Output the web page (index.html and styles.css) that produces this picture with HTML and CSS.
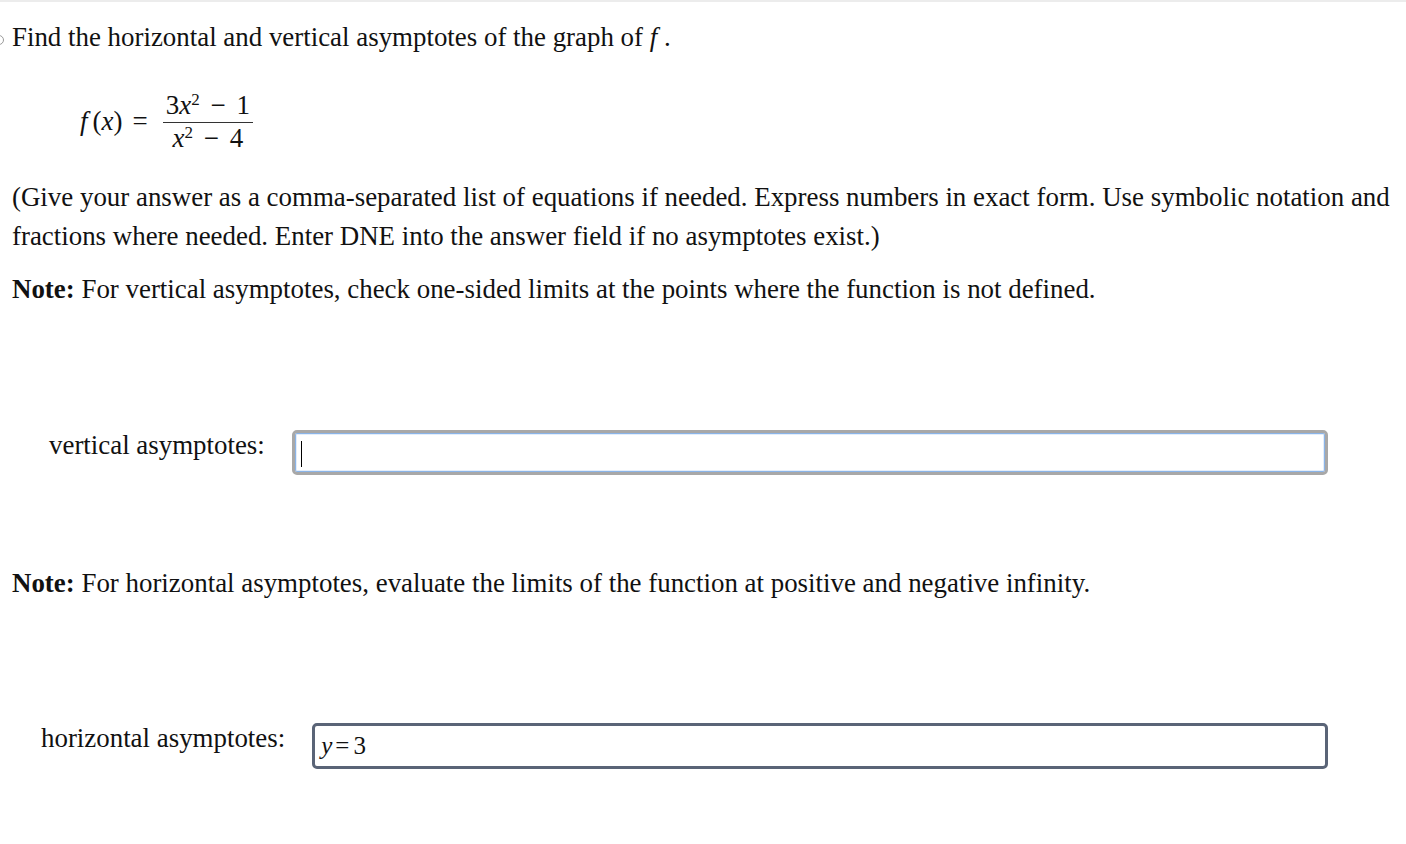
FILE: index.html
```html
<!DOCTYPE html>
<html>
<head>
<meta charset="utf-8">
<link rel="stylesheet" href="styles.css">
</head>
<body>
<div class="topline"></div>
<div class="question">
  <span class="marker"></span>
  <p class="prompt">Find the horizontal and vertical asymptotes of the graph of <i class="mi">f</i> .</p>
  <div class="formula">
    <span class="lhs"><i class="mi fn">f</i>(<i class="mi">x</i>)</span>
    <span class="eq">=</span>
    <span class="frac">
      <span class="num">3<i class="mi">x</i><sup>2</sup> <span class="op">&minus;</span> 1</span>
      <span class="den"><i class="mi">x</i><sup>2</sup> <span class="op">&minus;</span> 4</span>
    </span>
  </div>
  <p class="instructions">(Give your answer as a comma-separated list of equations if needed. Express numbers in exact form. Use symbolic notation and fractions where needed. Enter DNE into the answer field if no asymptotes exist.)</p>
  <p class="note"><b>Note:</b> For vertical asymptotes, check one-sided limits at the points where the function is not defined.</p>
  <div class="answer-row vertical">
    <span class="label">vertical asymptotes:</span>
    <div class="field"><span class="caret"></span></div>
  </div>
  <p class="note note-h"><b>Note:</b> For horizontal asymptotes, evaluate the limits of the function at positive and negative infinity.</p>
  <div class="answer-row horizontal">
    <span class="label">horizontal asymptotes:</span>
    <div class="field"><span class="value"><i class="mi">y</i><span class="veq">=</span>3</span></div>
  </div>
</div>
</body>
</html>
```
FILE: styles.css
```css
html, body {
  margin: 0;
  padding: 0;
  background: #ffffff;
}
body {
  font-family: "Liberation Serif", "Times New Roman", serif;
  color: #111111;
  font-size: 26.9px;
  width: 1406px;
  height: 844px;
  overflow: hidden;
}
.topline {
  height: 2px;
  background: #ececec;
}
.question {
  position: relative;
  padding: 0 8px 0 12px;
}
.marker {
  position: absolute;
  left: -6px;
  top: 33px;
  width: 8px;
  height: 8px;
  border: 1.5px solid #9a9a9a;
  border-radius: 50%;
}
.mi {
  font-style: italic;
}
.fn {
  margin-right: 5px;
}
.prompt {
  margin: 0;
  padding-top: 20px;
  line-height: 30px;
}
.formula {
  display: flex;
  align-items: center;
  margin-top: 34px;
  margin-left: 68px;
  font-size: 27px;
  height: 70px;
}
.lhs {
  margin-right: 10px;
}
.eq {
  margin-right: 15px;
}
.frac {
  display: flex;
  flex-direction: column;
  align-items: center;
}
.num {
  padding: 0 3px 3px;
  border-bottom: 1.5px solid #333;
  line-height: 28px;
}
.den {
  padding-top: 1px;
  line-height: 28px;
}
.op {
  margin: 0 4px;
}
sup {
  font-size: 17px;
  line-height: 0;
  vertical-align: 9px;
}
.instructions {
  margin: 22px 0 0;
  line-height: 39px;
}
.note {
  margin: 18px 0 0;
  line-height: 30px;
}
.answer-row {
  display: flex;
  align-items: flex-start;
}
.vertical {
  margin-top: 126px;
  padding-left: 37px;
}
.horizontal {
  margin-top: 125px;
  padding-left: 29px;
}
.label {
  margin-right: 27px;
  line-height: 30px;
}
.field {
  box-sizing: border-box;
  border-radius: 5px;
  display: flex;
  align-items: center;
}
.vertical .field {
  width: 1036px;
  height: 45px;
  border: 3px solid #a8a8a8;
  box-shadow: inset 0 0 0 1px #8ab4e8, inset 0 0 0 2px #e3edf9;
}
.horizontal .field {
  width: 1016px;
  height: 46px;
  border: 3px solid #5a6477;
}
.caret {
  display: block;
  width: 1.5px;
  height: 26px;
  background: #000;
  margin-left: 6px;
  margin-top: 3px;
}
.value {
  margin-left: 6px;
  margin-top: 0px;
  font-size: 25px;
}
.veq {
  margin: 0 4px 0 3px;
}
.note-h {
  margin-top: 93px;
}
```
